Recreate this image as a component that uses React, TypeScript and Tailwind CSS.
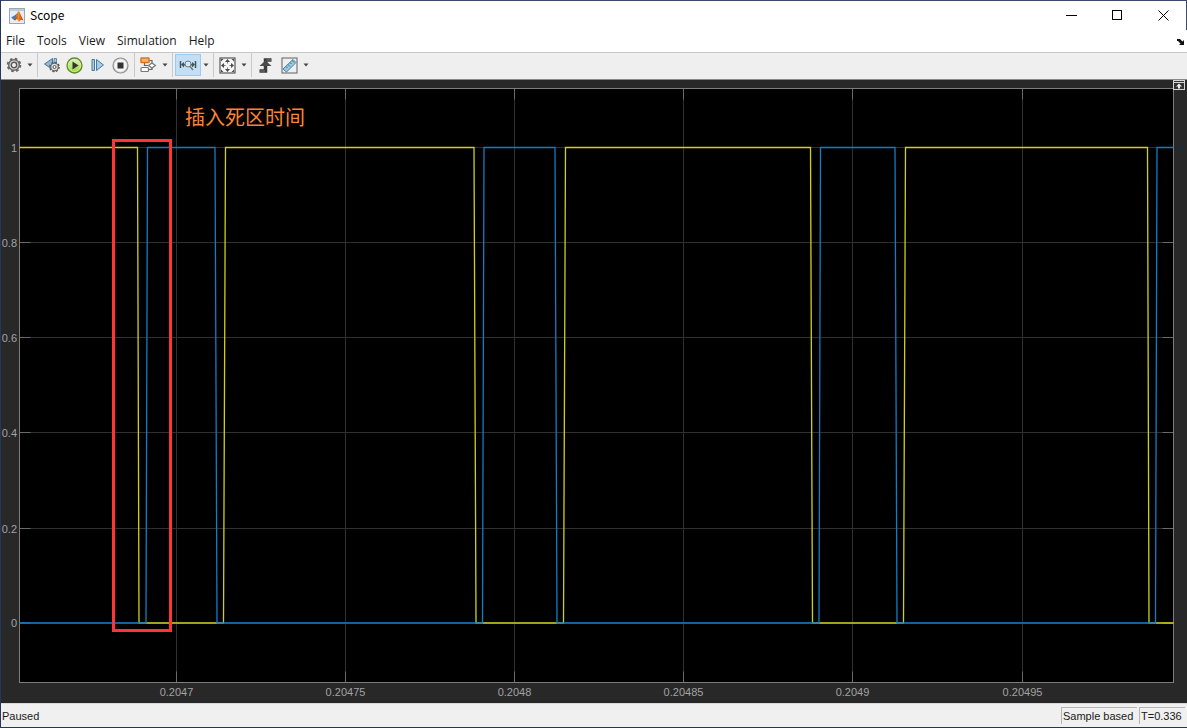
import type { ReactNode } from 'react';
import clsx from 'clsx';

const menus = ['File', 'Tools', 'View', 'Simulation', 'Help'];

const xTicks = [
  { x: 176.5, label: '0.2047' },
  { x: 345.5, label: '0.20475' },
  { x: 514.5, label: '0.2048' },
  { x: 683.5, label: '0.20485' },
  { x: 852.5, label: '0.2049' },
  { x: 1022.5, label: '0.20495' },
];

const yTicks = [
  { y: 147.5, label: '1' },
  { y: 242.5, label: '0.8' },
  { y: 337.5, label: '0.6' },
  { y: 432.5, label: '0.4' },
  { y: 528.5, label: '0.2' },
  { y: 623, label: '0' },
];

const PLOT = { left: 19.5, right: 1173.5, top: 88.5, bottom: 682.5 };
const HIGH = 147.5;
const LOW = 623;

// each edge is [x at the start of the ramp, x at its end]
const upperEdges = [[137.5, 139], [223.5, 225.5], [474, 476], [563.5, 565.5], [810.5, 812.5], [903.5, 905.5], [1147.5, 1149]];
const lowerEdges = [[146, 147.5], [215, 217], [482.5, 484], [555, 557], [819, 820.5], [895, 897], [1155.5, 1157]];

const pulse = (edges: number[][], startHigh: boolean) => {
  let high = startHigh;
  const points = [`${PLOT.left},${high ? HIGH : LOW}`];
  edges.forEach(([from, to]) => {
    points.push(`${from},${high ? HIGH : LOW}`);
    high = !high;
    points.push(`${to},${high ? HIGH : LOW}`);
  });
  points.push(`${PLOT.right},${high ? HIGH : LOW}`);
  return points.join(' ');
};

const ToolButton = ({ label, className, children }: { label: string; className?: string; children: ReactNode }) => (
  <button type="button" aria-label={label} title={label} className={clsx('flex h-[22px] items-center justify-center', className || 'w-[23px]')}>
    {children}
  </button>
);

const MenuArrow = ({ label }: { label: string }) => (
  <button type="button" aria-label={label} className="flex h-[22px] w-2.5 items-center justify-center">
    <svg width="6" height="4" viewBox="0 0 6 4"><path d="M.5 .5h5L3 3.5z" fill="#444" /></svg>
  </button>
);

const Divider = () => <div className="mx-0.5 h-6 w-px bg-[#c9c9c9]" />;

const MatlabIcon = () => (
  <svg width="16" height="16" viewBox="0 0 16 16">
    <defs>
      <linearGradient id="flame" x1="0" x2="1">
        <stop offset="0" stopColor="#8c2418" />
        <stop offset=".5" stopColor="#f08a1d" />
        <stop offset="1" stopColor="#b5260e" />
      </linearGradient>
    </defs>
    <rect x=".5" y=".5" width="15" height="15" fill="#e9edf2" stroke="#9ba6b3" />
    <path d="M1 1h14v2H1z" fill="#bccbdc" />
    <path d="M2 9.500l3.500-2L8.500 5 6.500 10.500 4.500 11.500z" fill="#3e7fb0" />
    <path d="M4.500 11.500l2-1.500C8 7.500 8.500 3 9.500 3S12 8 14.500 12.500c-2-1.500-3-1-4.500 1.500L8 11 6 12.500z" fill="url(#flame)" />
  </svg>
);

const GearIcon = () => (
  <svg width="16" height="16" viewBox="0 0 16 16" fill="none">
    <circle cx="8" cy="8" r="6.300" stroke="#666" strokeWidth="2" strokeDasharray="2.600 2.350" />
    <circle cx="8" cy="8" r="5.300" fill="#dcdcdc" stroke="#6a6a6a" strokeWidth="1.500" />
    <circle cx="8" cy="8" r="2.700" fill="#f4f4f4" stroke="#5a5a5a" strokeWidth="1.500" />
  </svg>
);

const StepBackIcon = () => (
  <svg width="18" height="16" viewBox="0 0 18 16" fill="none">
    <path d="M9.500 1.500L1.500 7l8 5.500z" fill="#8fb9da" stroke="#4a7698" />
    <path d="M11 1.500h2.500v4H11z" fill="#a9cbe5" stroke="#4a7698" strokeWidth=".8" />
    <circle cx="11.500" cy="10" r="4.500" stroke="#555" strokeWidth="1.600" strokeDasharray="2 1.500" />
    <circle cx="11.500" cy="10" r="3.800" fill="#ddd" stroke="#666" strokeWidth="1.200" />
    <circle cx="11.500" cy="10" r="1.500" fill="#fff" stroke="#555" />
  </svg>
);

const RunIcon = () => (
  <svg width="17" height="17" viewBox="0 0 17 17">
    <defs>
      <linearGradient id="run" x1="0" y1="0" x2="0" y2="1">
        <stop offset="0" stopColor="#e2efcf" />
        <stop offset="1" stopColor="#98d92c" />
      </linearGradient>
    </defs>
    <circle cx="8.500" cy="8.500" r="7.500" fill="url(#run)" stroke="#5f8c30" strokeWidth="1.300" />
    <circle cx="8.500" cy="8.500" r="6" fill="none" stroke="#d9f59b" strokeOpacity=".7" />
    <path d="M6.500 4.500l6 4-6 4z" fill="#333" />
  </svg>
);

const StepForwardIcon = () => (
  <svg width="14" height="14" viewBox="0 0 14 14" fill="#a8cbe6" stroke="#46799f">
    <path d="M1 1.500h2.500v11H1z" />
    <path d="M5.500 1.500L12.500 7l-7 5.500z" />
  </svg>
);

const StopIcon = () => (
  <svg width="17" height="17" viewBox="0 0 17 17">
    <circle cx="8.500" cy="8.500" r="7.500" fill="#dcdcdc" stroke="#909090" strokeWidth="1.200" />
    <circle cx="8.500" cy="8.500" r="5.500" fill="#f4f4f4" stroke="#fff" />
    <path d="M5.500 5.500h6v6h-6z" fill="#333" />
  </svg>
);

const HighlightBlockIcon = () => (
  <svg width="17" height="16" viewBox="0 0 17 16" fill="none" strokeWidth="1.200">
    <path d="M9 3.500h3v3M4.500 6v2.500H9M12 10v2.500H9" stroke="#666" />
    <rect x="1" y="1" width="8" height="4.500" rx=".5" fill="#f6b070" stroke="#df741d" strokeWidth="1.500" />
    <rect x="1" y="10.500" width="7.500" height="4" rx="1" fill="#fff" stroke="#777" />
    <path d="M8.500 8.500L12 6l3.500 2.500L12 11z" fill="#fff" stroke="#777" />
  </svg>
);

const ZoomXIcon = () => (
  <svg width="18" height="14" viewBox="0 0 18 14" fill="none" className="shrink-0">
    <path d="M1.500 3v7M16.500 3v7" stroke="#455" strokeWidth="1.500" />
    <path d="M2 6.500l3-2.500v2h1.500v1.500H5v2zM16 6.500L13 4v2h-1v1.500h1v2z" fill="#455" />
    <circle cx="9" cy="6" r="3" fill="#d7eaf8" stroke="#6c7982" />
    <path d="M11 8.500l3 3.500" stroke="#777" strokeWidth="1.500" />
  </svg>
);

const FitIcon = () => (
  <svg width="17" height="17" viewBox="0 0 17 17">
    <rect x="1" y="1" width="15" height="15" fill="#f6f6f6" stroke="#555" strokeWidth="1.200" />
    <g fill="#4b4b4b">
      <path d="M8.500 2l2.500 3H6zM8.500 15l2.500-3H6zM2 8.500L5 6v5zM15 8.500L12 6v5z" />
      <path d="M2 2h2.500L2 4.500zM15 2h-2.500L15 4.500zM2 15h2.500L2 12.500zM15 15h-2.500l2.500-2.500z" />
    </g>
    <path d="M8.500 5v1.500M8.500 12v-1.500M5 8.500h1.500M12 8.500h-1.500" stroke="#777" />
  </svg>
);

const TriggerIcon = () => (
  <svg width="16" height="17" viewBox="0 0 16 17" fill="none">
    <path d="M1.500 14h6V3h6" stroke="#3c3c3c" strokeWidth="3.500" />
    <path d="M7.500 3.500l6 5.500h-12z" fill="#4a4a4a" />
    <path d="M2.500 14h4.500M8.500 3h4.500" stroke="#888" strokeWidth=".8" />
  </svg>
);

const RulerIcon = () => (
  <svg width="17" height="17" viewBox="0 0 17 17" fill="none">
    <rect x="1" y="1" width="15" height="15" fill="#efefef" stroke="#777" strokeWidth="1.200" />
    <path d="M2 12L12 2.500l3 3L5.500 15z" fill="#9bcbe4" stroke="#46819f" />
    <path d="M5 9.500l1.500 1.500M7 7.500L9 9.500M9 5.500l1.500 1.500M11 3.500l2 2" stroke="#28627f" strokeWidth=".9" />
  </svg>
);

const ScopePlot = () => {
  const { left, right, top, bottom } = PLOT;
  return (
    <svg viewBox="1 80 1186 623" className="block h-auto w-full" role="img" aria-label="Scope signals">
      <rect x={left} y={top} width={right - left} height={bottom - top} fill="#000" />
      <g stroke="#303030">
        {xTicks.map(({ x }) => <path key={x} d={`M${x} ${top}V${bottom}`} />)}
        {yTicks.map(({ y }) => <path key={y} d={`M${left} ${y}H${right}`} />)}
      </g>
      <g stroke="#6a6a6a">
        {xTicks.map(({ x }) => <path key={x} d={`M${x} ${top}v11M${x} ${bottom}v-11`} />)}
        {yTicks.map(({ y }) => <path key={y} d={`M${left} ${y}h11M${right} ${y}h-11`} />)}
      </g>
      <rect x={left} y={top} width={right - left} height={bottom - top} fill="none" stroke="#7d7d7d" />
      <polyline points={pulse(upperEdges, true)} fill="none" stroke="#d0d01c" strokeWidth="1.300" />
      <polyline points={pulse(lowerEdges, false)} fill="none" stroke="#137bc7" strokeWidth="1.300" />

      <g fill="#a3a3a3" fontSize="11" fontFamily="'Liberation Sans', Arial, sans-serif">
        {xTicks.map(({ x, label }) => <text key={label} x={x} y="696" textAnchor="middle">{label}</text>)}
        {yTicks.map(({ y, label }) => <text key={label} x="17" y={y + 4} textAnchor="end">{label}</text>)}
      </g>

      <rect x="113.500" y="140.500" width="57" height="490" fill="none" stroke="#fe3535" strokeWidth="3" />
      <text x="185" y="125" fill="#fa8537" fontSize="20" fontFamily="'Noto Sans CJK SC', sans-serif">插入死区时间</text>

      {/* maximize axes */}
      <rect x="1173.500" y="80.500" width="11" height="9" fill="#333" stroke="#d5d5d5" />
      <path d="M1174 82.500h10" stroke="#d5d5d5" />
      <path d="M1179 83.500l3 3h-2v2h-2v-2h-2z" fill="#eee" />
    </svg>
  );
};

const App = () => {
  return (
    <div className="flex min-h-screen flex-col border-b border-l border-[#26365c] bg-[#282828] font-['Open_Sans','Noto_Sans',sans-serif] text-[#1a1a1a]">
      <header className="flex h-[30px] items-center border-t border-r border-[#3b4a6b] bg-white pl-2">
        <MatlabIcon />
        <h1 className="ml-[5px] pb-0.5 font-['Noto_Sans_CJK_SC',sans-serif] text-[12px] leading-4 text-black">Scope</h1>
        <div className="ml-auto flex">
          <button type="button" aria-label="Minimize" className="flex h-7 w-[46px] items-center justify-center">
            <svg width="11" height="11"><path d="M0 5.500h11" stroke="#000" /></svg>
          </button>
          <button type="button" aria-label="Maximize" className="flex h-7 w-[46px] items-center justify-center">
            <svg width="11" height="11"><rect x=".5" y=".5" width="9" height="9" fill="none" stroke="#000" /></svg>
          </button>
          <button type="button" aria-label="Close" className="flex h-7 w-[46px] items-center justify-center">
            <svg width="11" height="11"><path d="M.5 .5l10 10M10.500 .5l-10 10" stroke="#000" /></svg>
          </button>
        </div>
      </header>

      <nav className="flex h-[22px] items-center gap-3 bg-white pr-0.5 pl-[5px]">
        {menus.map((menu) => (
          <button key={menu} type="button" className="text-[12px] leading-4">{menu}</button>
        ))}
        <button type="button" aria-label="Dock window" className="ml-auto">
          <svg width="8" height="7" viewBox="0 0 8 7"><path d="M0 1h3l2.500 2.500L7 2v5H2l1.500-1.500L1 3H0z" fill="#111" /></svg>
        </button>
      </nav>

      <div role="toolbar" className="flex h-7 items-center border-t border-b border-t-[#c8c8c8] border-b-[#8a8a8a] bg-[#efefef] pb-0.5 pl-0.5">
        <ToolButton label="Configuration properties" className="w-[22px]"><GearIcon /></ToolButton>
        <MenuArrow label="Configuration options" />
        <Divider />
        <ToolButton label="Step back"><StepBackIcon /></ToolButton>
        <ToolButton label="Run"><RunIcon /></ToolButton>
        <ToolButton label="Step forward"><StepForwardIcon /></ToolButton>
        <ToolButton label="Stop"><StopIcon /></ToolButton>
        <Divider />
        <ToolButton label="Highlight Simulink block"><HighlightBlockIcon /></ToolButton>
        <MenuArrow label="Highlight options" />
        <Divider />
        <ToolButton label="Zoom X" className="w-[26px] border border-[#9ccbf0] bg-[#c2dff5]"><ZoomXIcon /></ToolButton>
        <MenuArrow label="Zoom options" />
        <Divider />
        <ToolButton label="Scale axes limits"><FitIcon /></ToolButton>
        <MenuArrow label="Scale options" />
        <Divider />
        <ToolButton label="Triggers"><TriggerIcon /></ToolButton>
        <ToolButton label="Cursor measurements" className="w-6"><RulerIcon /></ToolButton>
        <MenuArrow label="Measurement options" />
      </div>

      <main className="flex-1">
        <ScopePlot />
      </main>

      <footer className="flex h-6 items-center gap-0.5 border-t border-[#d8d8d8] bg-[#f0f0f0] pr-0.5 font-['Liberation_Sans',Arial,sans-serif] text-[11px] leading-4">
        <span className="mr-auto pl-px">Paused</span>
        <span className="w-[76px] border-t border-l border-[#b5b5b5] pl-px">Sample based</span>
        <span className="w-[46px] border-t border-l border-[#b5b5b5] pl-px">T=0.336</span>
      </footer>
    </div>
  );
};

export default App;
